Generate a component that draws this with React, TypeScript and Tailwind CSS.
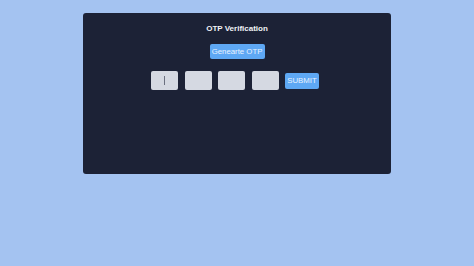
export default function App() {
  const slots = [0, 1, 2, 3];
  return (
    <div className="flex h-[266px] w-full justify-center bg-[#a4c3f1] pt-[13px] font-['Liberation_Sans',Arial,sans-serif]">
      <div className="flex h-[161px] w-[308px] flex-col items-center rounded-[3px] bg-[#1c2236] pt-[10px]">
        <h1 className="text-[8px] font-bold leading-[12px] text-[#f1f3f7]">OTP Verification</h1>
        <button
          type="button"
          className="mt-[9px] h-[15px] w-[55px] rounded-[2px] bg-[#5ea8f4] text-[7.8px] leading-[15px] text-[#e8f2ff]"
        >
          Genearte OTP
        </button>
        <div className="mt-[12px] mr-[4px] flex items-center gap-[6.5px]">
          {slots.map((i) => (
            <div
              key={i}
              className="flex h-[19px] w-[27px] items-center justify-center rounded-[2px] bg-[#d5d9e2]"
            >
              {i === 0 && <div className="h-[9px] w-px bg-[#6b7080]" />}
            </div>
          ))}
          <button
            type="button"
            className="h-[16px] w-[34px] rounded-[2px] bg-[#5ea8f4] text-[7.8px] leading-[16px] text-[#e8f2ff]"
          >
            SUBMIT
          </button>
        </div>
      </div>
    </div>
  );
}
